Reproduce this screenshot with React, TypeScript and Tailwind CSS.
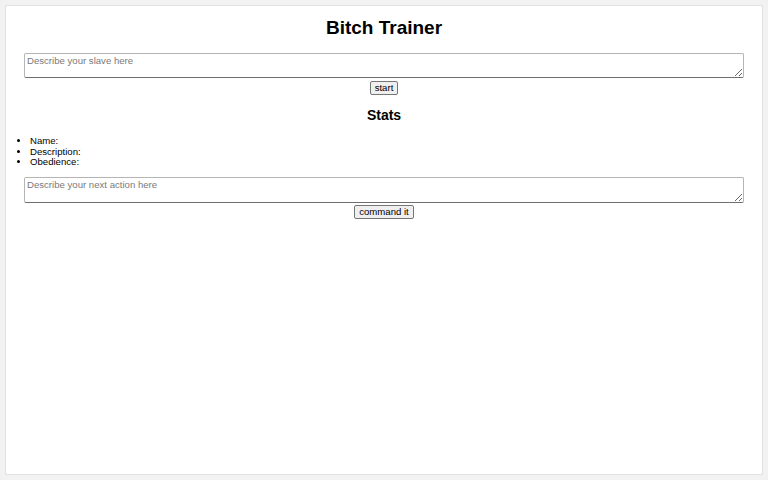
import React, { useState } from 'react';

const STATS = ['Name:', 'Description:', 'Obedience:'];

export default function App() {
  const [desc, setDesc] = useState('');
  const [action, setAction] = useState('');

  return (
    <div className="h-[480px] w-[768px] bg-[#f2f2f2] p-[5px] font-['Liberation_Sans',Arial,sans-serif] text-black">
      <div className="flex h-[470px] flex-col border border-[#e2e2e2] bg-white px-[18px] pt-[11px]">
        <h1 className="text-center text-[19px] font-bold leading-[22px]">Bitch Trainer</h1>

        <textarea
          value={desc}
          onChange={(e) => setDesc(e.target.value)}
          placeholder="Describe your slave here"
          className="mt-[14px] h-[25px] w-full resize-y rounded-[2px] border border-[#b5b5b5] border-b-[#6f6f6f] px-[2px] py-[1px] text-[9.6px] leading-[11px] placeholder:text-[#7a7a7a]"
        />
        <div className="mt-[3px] flex justify-center">
          <button className="h-[14px] rounded-[2px] border border-[#767676] bg-[#efefef] px-[4px] text-[9.6px] leading-[12px]">
            start
          </button>
        </div>

        <h2 className="mt-[12px] text-center text-[14px] font-bold leading-[16px]">Stats</h2>

        <ul className="mt-[13px] list-disc pl-[6px] text-[9.6px] leading-[10.5px]">
          {STATS.map((s) => (
            <li key={s}>{s}</li>
          ))}
        </ul>

        <textarea
          value={action}
          onChange={(e) => setAction(e.target.value)}
          placeholder="Describe your next action here"
          className="mt-[9px] h-[26px] w-full resize-y rounded-[2px] border border-[#b5b5b5] border-b-[#6f6f6f] px-[2px] py-[1px] text-[9.6px] leading-[11px] placeholder:text-[#7a7a7a]"
        />
        <div className="mt-[2px] flex justify-center">
          <button className="h-[14px] rounded-[2px] border border-[#767676] bg-[#efefef] px-[4px] text-[9.6px] leading-[12px]">
            command it
          </button>
        </div>
      </div>
    </div>
  );
}
